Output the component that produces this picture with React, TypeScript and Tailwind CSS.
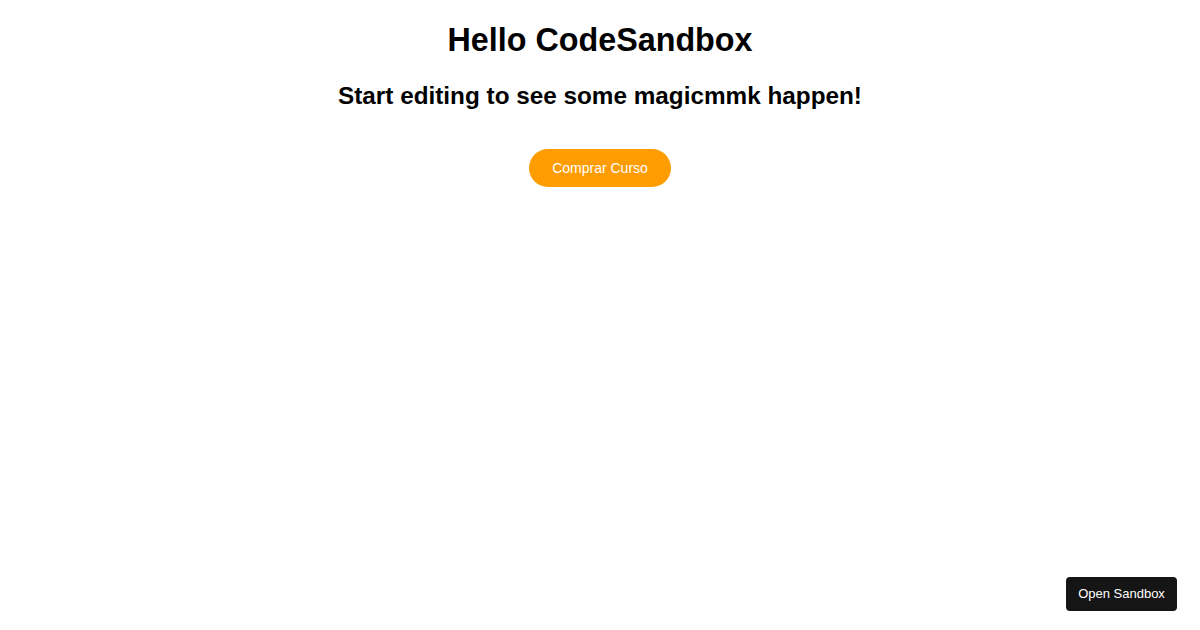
import React from 'react';

export default function App() {
  return (
    <div className="min-h-[630px] bg-white text-center font-['Liberation_Sans',Arial,sans-serif] text-black">
      <h1 className="pt-[22px] text-[32.3px] font-bold leading-[37px]">Hello CodeSandbox</h1>
      <h2 className="mt-[23px] text-[24.3px] font-bold leading-[28px]">Start editing to see some magicmmk happen!</h2>
      <div className="mt-[39px] flex justify-center">
        <button className="h-[38px] w-[142px] rounded-full bg-[#ff9c00] text-[14px] text-white">
          Comprar Curso
        </button>
      </div>

      {/* floating sandbox link */}
      <div className="fixed bottom-[19px] right-[23px] flex h-[34px] w-[111px] items-center justify-center rounded-[4px] bg-[#151515] text-[13px] text-white">
        Open Sandbox
      </div>
    </div>
  );
}
